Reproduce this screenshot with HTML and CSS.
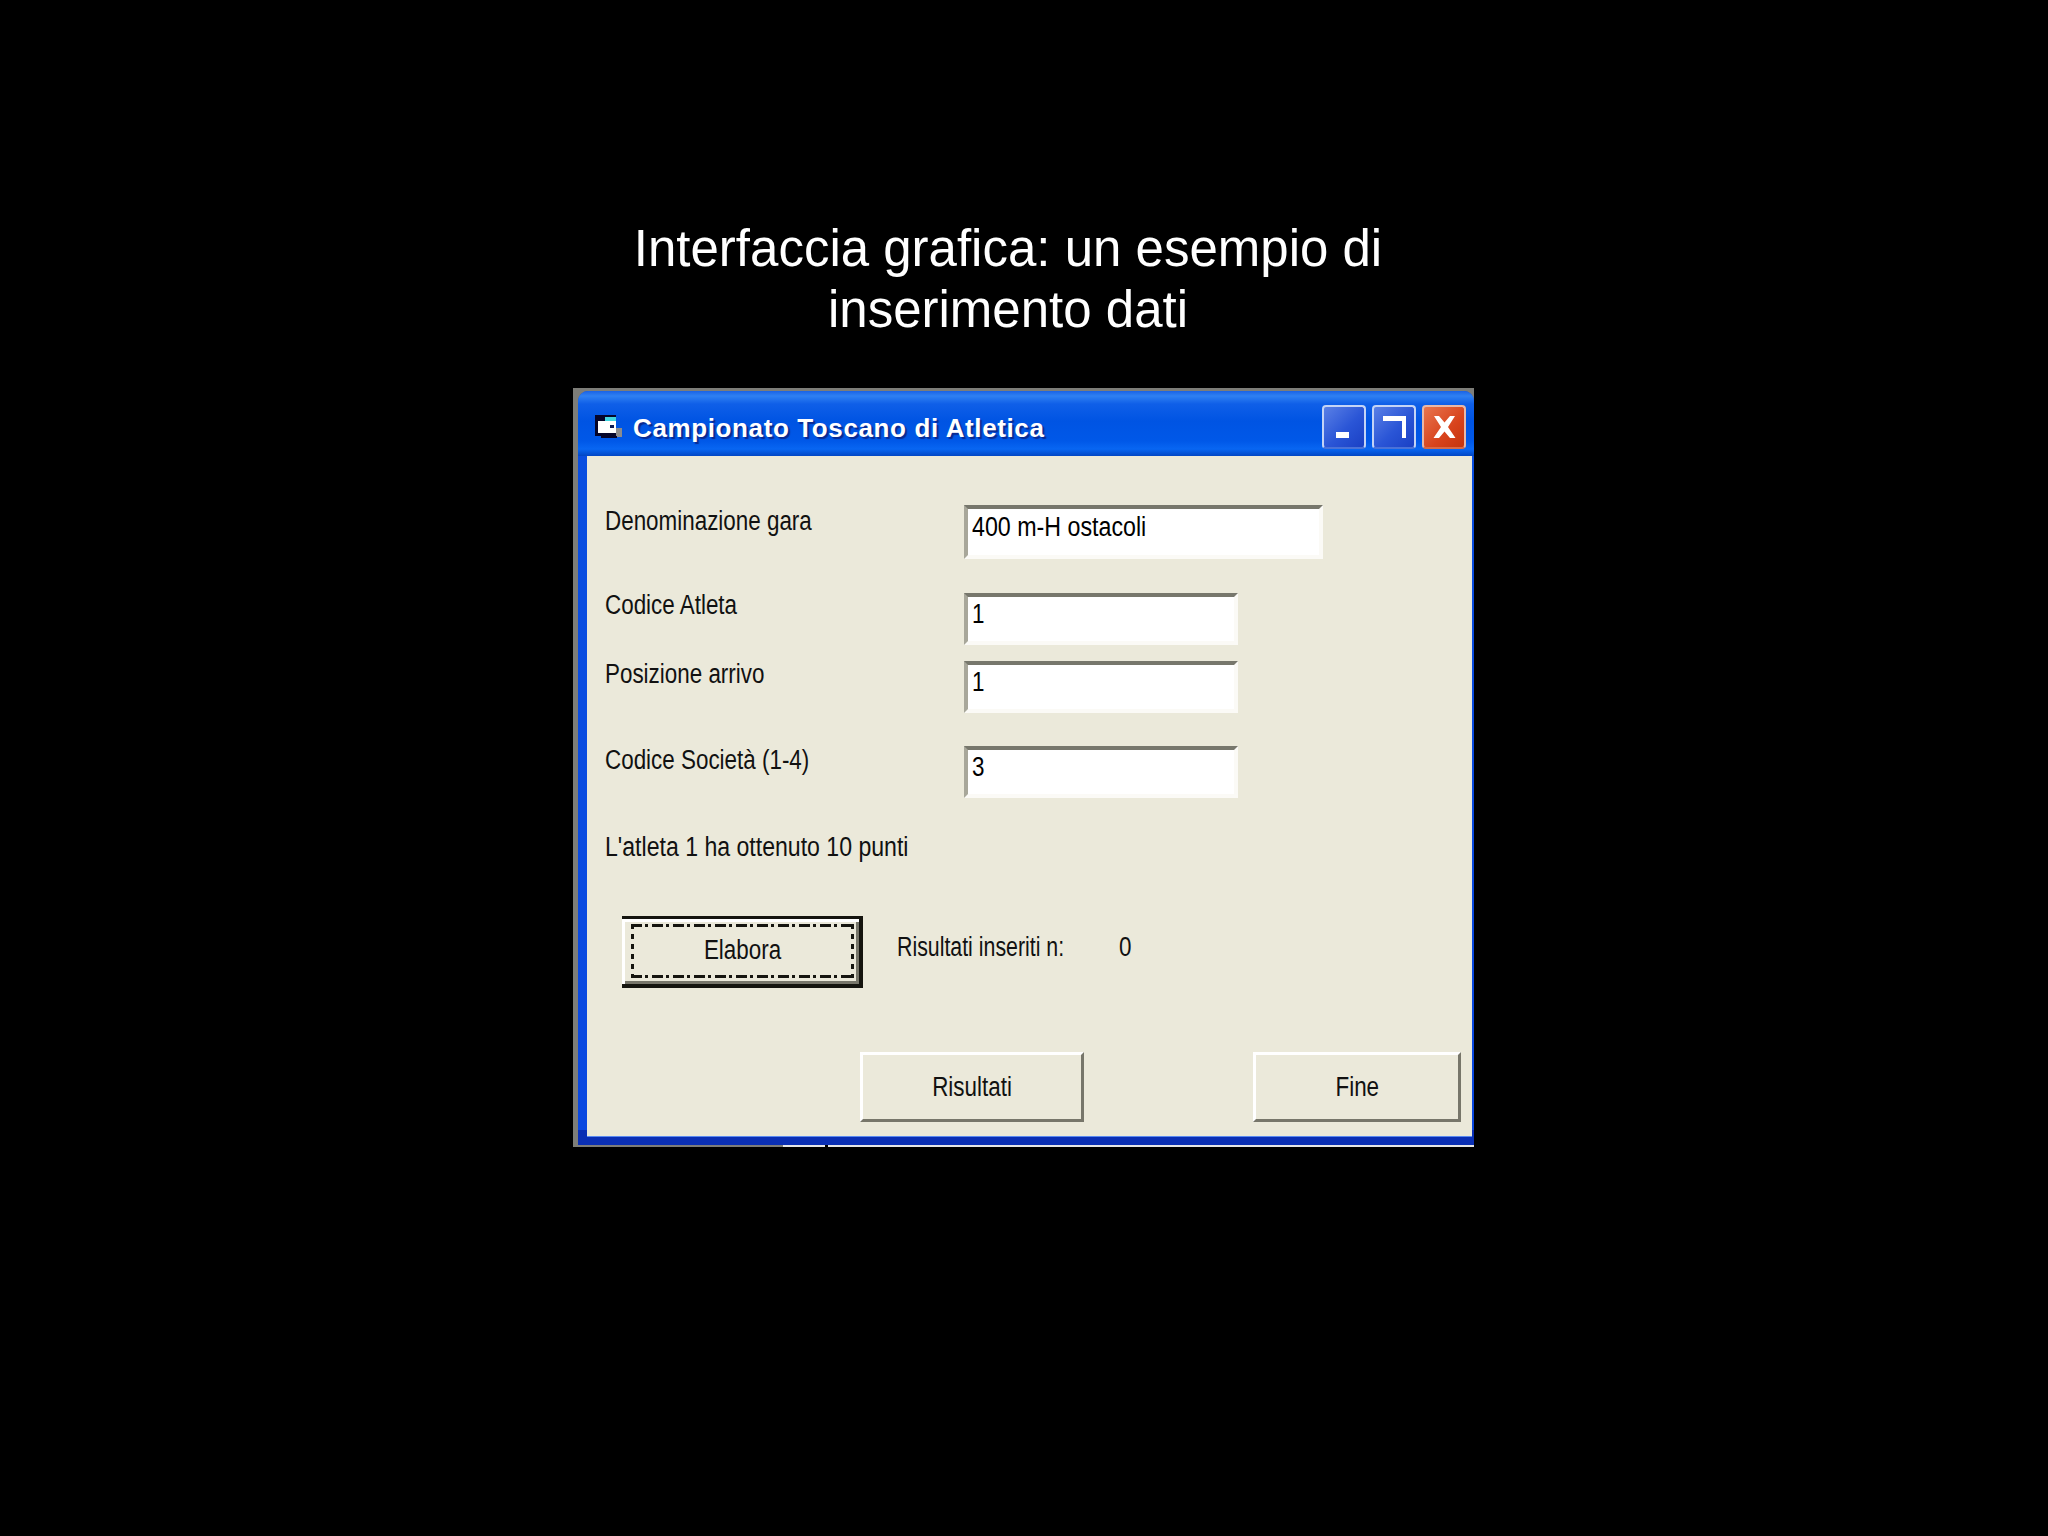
FILE: index.html
```html
<!DOCTYPE html>
<html lang="it">
<head>
  <meta charset="UTF-8" />
  <title>Interfaccia grafica: un esempio di inserimento dati</title>
  <link rel="stylesheet" href="styles.css">
</head>
<body>
  <h1 class="slide-title">Interfaccia grafica: un esempio di<br>inserimento dati</h1>

  <div class="window">
    <div class="frame">
      <div class="titlebar">
        <svg class="app-icon" width="27" height="23" viewBox="0 0 27 23">
          <rect x="18" y="13" width="9" height="9" fill="#8c8c8c"/>
          <rect x="0" y="0" width="21" height="21" fill="#05052a"/>
          <rect x="3" y="6" width="18" height="12" fill="#fff"/>
          <rect x="10" y="2" width="11" height="4" fill="#3fd6e0"/>
          <rect x="15" y="10" width="4" height="3" fill="#0a1a55"/>
          <rect x="6" y="21" width="16" height="2" fill="#05052a"/>
        </svg>
        <span class="caption">Campionato Toscano di Atletica</span>
        <div class="caption-buttons">
          <div class="cap-btn">
            <svg width="13" height="6" viewBox="0 0 13 6"><rect width="13" height="6" fill="#fff"/></svg>
          </div>
          <div class="cap-btn">
            <svg width="23" height="22" viewBox="0 0 23 22"><path d="M0 0H23V22H19V5H0Z" fill="#fff"/></svg>
          </div>
          <div class="cap-btn cap-close">
            <svg width="23" height="22" viewBox="0 0 23 22"><path d="M1 0H6L11.500 6.500L17 0H22L15 11L22.500 22H17L11.500 15.500L6 22H.5L8 11Z" fill="#fff"/></svg>
          </div>
        </div>
      </div>

      <div class="client">
        <div class="field field-gara">
          <label><span class="t">Denominazione gara</span></label>
          <div class="textbox wide"><span class="t">400 m-H ostacoli</span></div>
        </div>
        <div class="field field-atleta">
          <label><span class="t">Codice Atleta</span></label>
          <div class="textbox"><span class="t">1</span></div>
        </div>
        <div class="field field-arrivo">
          <label><span class="t">Posizione arrivo</span></label>
          <div class="textbox"><span class="t">1</span></div>
        </div>
        <div class="field field-societa">
          <label><span class="t">Codice Società (1-4)</span></label>
          <div class="textbox"><span class="t">3</span></div>
        </div>

        <p class="status"><span class="t">L'atleta 1 ha ottenuto 10 punti</span></p>

        <div class="elabora-row">
          <button class="btn btn-default"><span class="focus"><span class="t">Elabora</span></span></button>
          <span class="count-label"><span class="t">Risultati inseriti n:</span></span>
          <span class="count-value"><span class="t">0</span></span>
        </div>

        <div class="bottom-row">
          <button class="btn btn-risultati"><span class="t">Risultati</span></button>
          <button class="btn btn-fine"><span class="t">Fine</span></button>
        </div>
      </div>
    </div>
    <div class="base-line"></div>
  </div>
</body>
</html>
```

FILE: styles.css
```css
html, body { margin: 0; height: 100%; }
body {
  background: #000; overflow: hidden;
  font-family: "Liberation Sans", Arial, sans-serif;
}

.slide-title {
  margin: 0; padding-top: 218px; width: 2016px; height: 170px;
  color: #fff; text-align: center;
  font-size: 51px; font-weight: normal; line-height: 61px;
}

/* the dialog font is a stretched bitmap: tall and narrow */
.t { display: inline-block; transform: scaleX(.83); transform-origin: left center; }
.btn .t { transform-origin: center; }

.window {
  box-sizing: border-box; width: 901px; height: 759px; margin-left: 573px;
  padding: 3px 0 0 5px; background: #7d7d78;
}
.frame {
  height: 754px; padding: 0 2px 8px 9px; box-sizing: border-box; border-radius: 10px 10px 0 0;
  display: flex; flex-direction: column;
  background: linear-gradient(#0a4fe0, #0a48e0 98%, #0a2fb4 98%);
}
.base-line { height: 2px; background: linear-gradient(90deg, #7d7d78 205px, #e6e6e6 205px, #e6e6e6 247px, #000 247px, #000 250px, #e6e6e6 250px); }

.titlebar {
  height: 65px; margin: 0 -2px 0 -9px; padding: 0 8px 0 17px; display: flex; align-items: center;
  border-radius: 10px 10px 0 0; flex-shrink: 0;
  background: linear-gradient(#1a63e6 0, #2f80f2 5px, #0f5fe8 13px, #0054e3 30px, #0058e8 50px, #0866f2 58px, #0146c4 65px);
}
.app-icon { margin-top: 5px; }
.caption {
  margin-left: 11px; margin-top: 10px; color: #fff;
  font-weight: bold; font-size: 26px; letter-spacing: 0.62px; text-shadow: 2px 2px 1px #0a2a90;
}
.caption-buttons { margin-left: auto; display: flex; gap: 6px; margin-top: 6px; }
.cap-btn {
  box-sizing: border-box; width: 44px; height: 44px; display: flex; align-items: center; justify-content: center;
  border: 2px solid #c4d4f6; border-bottom-color: #4a72d8; border-radius: 4px;
  background: linear-gradient(135deg, #5a80e6, #2a55d6 55%, #1a40c4);
}
.cap-btn:first-child svg { margin-top: 16px; margin-right: 4px; }
.cap-close { background: linear-gradient(135deg, #e8754f, #d8431c 60%, #c4340f); border-color: #e9b8a8; border-bottom-color: #d86a48; }

.client { flex: 1; padding: 49px 11px 0 18px; background: #ebe9da; border-bottom: 1px solid #5a8af0; }

.field { display: flex; align-items: flex-start; }
.field label { width: 359px; flex-shrink: 0; font-size: 27px; line-height: 30px; color: #111; }
.field-gara label { margin-top: 1px; }
.field-atleta { margin-top: 34px; }
.field-atleta label { margin-top: -3px; }
.field-arrivo { margin-top: 16px; }
.field-arrivo label { margin-top: -2px; }
.field-societa { margin-top: 33px; }
.field-societa label { margin-top: -1px; }

.textbox {
  box-sizing: border-box; width: 274px; height: 52px; padding: 0 0 0 4px;
  background: #fff; color: #000; font-size: 27px; line-height: 34px;
  border: 4px solid #fbfaf6; border-top-color: #77776c; border-left-color: #a8a79a;
}
.textbox.wide { width: 359px; height: 54px; line-height: 37px; }
.textbox.wide .t { transform: scaleX(.86); }

.status { margin: 34px 0 0; height: 30px; font-size: 27px; line-height: 30px; color: #111; }
.status .t { transform: scaleX(.855); }

.elabora-row { display: flex; align-items: center; margin-top: 54px; height: 72px; }
.btn {
  box-sizing: border-box; padding: 0; font-family: inherit; font-size: 27px; color: #111;
  background: #ebe9da; border: 3px solid; border-color: #fff #77766a #77766a #fff;
}
.btn-default {
  width: 241px; height: 72px; margin-left: 17px; display: flex;
  border: 3px solid #15150f; border-left: 0; border-bottom-width: 4px; border-right-width: 4px;
  box-shadow: inset 3px 3px 0 #fff, inset -3px -3px 0 #77766a;
}
.focus {
  flex: 1; margin: 5px 5px 6px 9px; padding-bottom: 2px;
  display: flex; align-items: center; justify-content: center;
  --dash-x: repeating-linear-gradient(90deg, #15150f 0 11px, transparent 11px 14px, #15150f 14px 17px, transparent 17px 21px);
  --dash-y: repeating-linear-gradient(180deg, #15150f 0 5px, transparent 5px 10px);
  background:
    var(--dash-x) top / 100% 3px no-repeat,
    var(--dash-x) bottom / 100% 3px no-repeat,
    var(--dash-y) left / 3px 100% no-repeat,
    var(--dash-y) right / 3px 100% no-repeat;
}
.count-label { margin-left: 34px; margin-top: -9px; width: 222px; font-size: 27px; color: #111; }
.count-label .t { transform: scaleX(.79); }
.count-value { font-size: 27px; margin-top: -9px; color: #111; }

.bottom-row { display: flex; margin-top: 64px; }
.btn-risultati { width: 224px; height: 70px; margin-left: 255px; }
.btn-fine { width: 208px; height: 70px; margin-left: 169px; }
```
